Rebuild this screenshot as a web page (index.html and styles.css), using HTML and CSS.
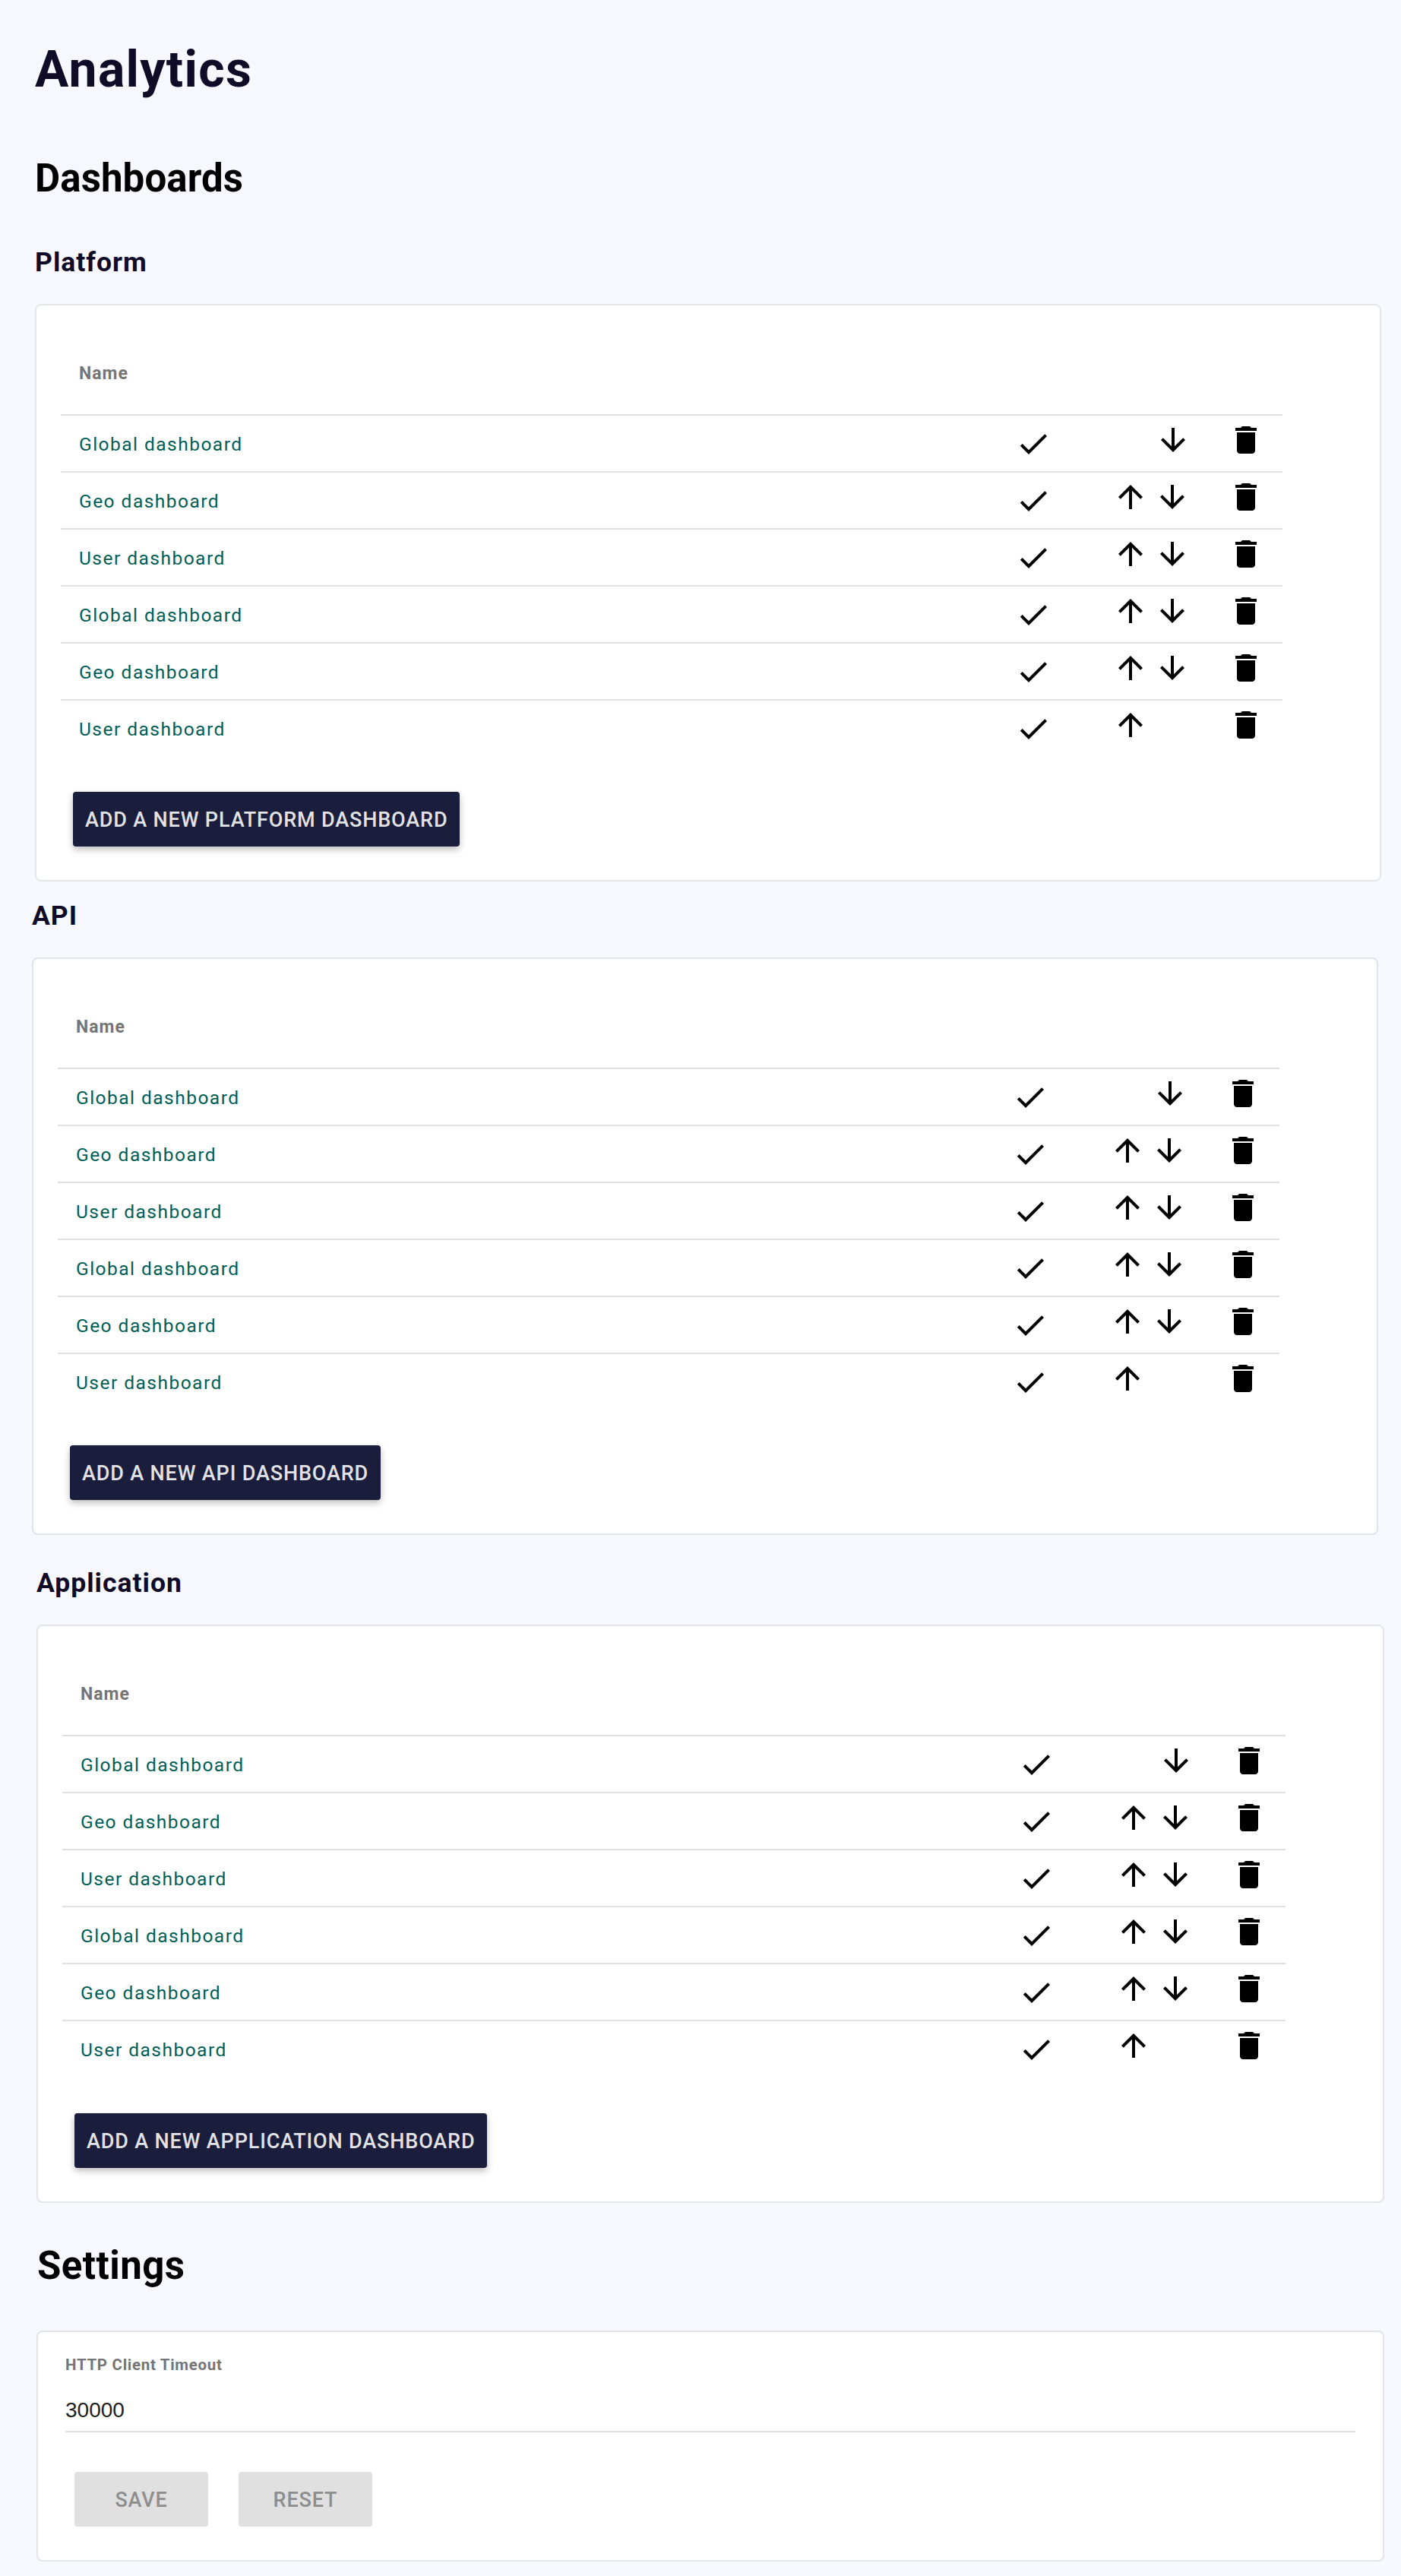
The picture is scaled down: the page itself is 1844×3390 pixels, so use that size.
FILE: index.html
```html
<!DOCTYPE html>
<html lang="en">
<head>
<meta charset="utf-8">
<title>Analytics</title>
<link rel="stylesheet" href="styles.css">
</head>
<body>
<svg class="sprite" aria-hidden="true">
  <symbol id="check" viewBox="0 0 24 24"><path d="M9 16.17L4.83 12l-1.42 1.41L9 19 21 7l-1.41-1.41z"/></symbol>
  <symbol id="up" viewBox="0 0 24 24"><path d="M4 12l1.41 1.41L11 7.83V20h2V7.83l5.58 5.59L20 12l-8-8-8 8z"/></symbol>
  <symbol id="down" viewBox="0 0 24 24"><path d="M20 12l-1.41-1.41L13 16.17V4h-2v12.17l-5.58-5.59L4 12l8 8 8-8z"/></symbol>
  <symbol id="trash" viewBox="0 0 24 24"><path d="M6 19c0 1.1.9 2 2 2h8c1.1 0 2-.9 2-2V7H6v12zM19 4h-3.5l-1-1h-5l-1 1H5v2h14V4z"/></symbol>
</svg>
<main class="page">
  <h1 class="title">Analytics</h1>
  <h2 class="heading heading-dashboards">Dashboards</h2>

  <section class="group group-platform">
    <h3 class="subheading">Platform</h3>
    <div class="card">
      <div class="table">
        <div class="table-head">Name</div>
        <div class="row"><a class="link">Global dashboard</a><svg class="icon check"><use href="#check"/></svg><svg class="icon down first"><use href="#down"/></svg><svg class="icon trash"><use href="#trash"/></svg></div>
        <div class="row"><a class="link">Geo dashboard</a><svg class="icon check"><use href="#check"/></svg><svg class="icon up"><use href="#up"/></svg><svg class="icon down"><use href="#down"/></svg><svg class="icon trash"><use href="#trash"/></svg></div>
        <div class="row"><a class="link">User dashboard</a><svg class="icon check"><use href="#check"/></svg><svg class="icon up"><use href="#up"/></svg><svg class="icon down"><use href="#down"/></svg><svg class="icon trash"><use href="#trash"/></svg></div>
        <div class="row"><a class="link">Global dashboard</a><svg class="icon check"><use href="#check"/></svg><svg class="icon up"><use href="#up"/></svg><svg class="icon down"><use href="#down"/></svg><svg class="icon trash"><use href="#trash"/></svg></div>
        <div class="row"><a class="link">Geo dashboard</a><svg class="icon check"><use href="#check"/></svg><svg class="icon up"><use href="#up"/></svg><svg class="icon down"><use href="#down"/></svg><svg class="icon trash"><use href="#trash"/></svg></div>
        <div class="row"><a class="link">User dashboard</a><svg class="icon check"><use href="#check"/></svg><svg class="icon up"><use href="#up"/></svg><svg class="icon trash"><use href="#trash"/></svg></div>
      </div>
      <button class="button add">ADD A NEW PLATFORM DASHBOARD</button>
    </div>
  </section>

  <section class="group group-api">
    <h3 class="subheading">API</h3>
    <div class="card">
      <div class="table">
        <div class="table-head">Name</div>
        <div class="row"><a class="link">Global dashboard</a><svg class="icon check"><use href="#check"/></svg><svg class="icon down first"><use href="#down"/></svg><svg class="icon trash"><use href="#trash"/></svg></div>
        <div class="row"><a class="link">Geo dashboard</a><svg class="icon check"><use href="#check"/></svg><svg class="icon up"><use href="#up"/></svg><svg class="icon down"><use href="#down"/></svg><svg class="icon trash"><use href="#trash"/></svg></div>
        <div class="row"><a class="link">User dashboard</a><svg class="icon check"><use href="#check"/></svg><svg class="icon up"><use href="#up"/></svg><svg class="icon down"><use href="#down"/></svg><svg class="icon trash"><use href="#trash"/></svg></div>
        <div class="row"><a class="link">Global dashboard</a><svg class="icon check"><use href="#check"/></svg><svg class="icon up"><use href="#up"/></svg><svg class="icon down"><use href="#down"/></svg><svg class="icon trash"><use href="#trash"/></svg></div>
        <div class="row"><a class="link">Geo dashboard</a><svg class="icon check"><use href="#check"/></svg><svg class="icon up"><use href="#up"/></svg><svg class="icon down"><use href="#down"/></svg><svg class="icon trash"><use href="#trash"/></svg></div>
        <div class="row"><a class="link">User dashboard</a><svg class="icon check"><use href="#check"/></svg><svg class="icon up"><use href="#up"/></svg><svg class="icon trash"><use href="#trash"/></svg></div>
      </div>
      <button class="button add">ADD A NEW API DASHBOARD</button>
    </div>
  </section>

  <section class="group group-application">
    <h3 class="subheading">Application</h3>
    <div class="card">
      <div class="table">
        <div class="table-head">Name</div>
        <div class="row"><a class="link">Global dashboard</a><svg class="icon check"><use href="#check"/></svg><svg class="icon down first"><use href="#down"/></svg><svg class="icon trash"><use href="#trash"/></svg></div>
        <div class="row"><a class="link">Geo dashboard</a><svg class="icon check"><use href="#check"/></svg><svg class="icon up"><use href="#up"/></svg><svg class="icon down"><use href="#down"/></svg><svg class="icon trash"><use href="#trash"/></svg></div>
        <div class="row"><a class="link">User dashboard</a><svg class="icon check"><use href="#check"/></svg><svg class="icon up"><use href="#up"/></svg><svg class="icon down"><use href="#down"/></svg><svg class="icon trash"><use href="#trash"/></svg></div>
        <div class="row"><a class="link">Global dashboard</a><svg class="icon check"><use href="#check"/></svg><svg class="icon up"><use href="#up"/></svg><svg class="icon down"><use href="#down"/></svg><svg class="icon trash"><use href="#trash"/></svg></div>
        <div class="row"><a class="link">Geo dashboard</a><svg class="icon check"><use href="#check"/></svg><svg class="icon up"><use href="#up"/></svg><svg class="icon down"><use href="#down"/></svg><svg class="icon trash"><use href="#trash"/></svg></div>
        <div class="row"><a class="link">User dashboard</a><svg class="icon check"><use href="#check"/></svg><svg class="icon up"><use href="#up"/></svg><svg class="icon trash"><use href="#trash"/></svg></div>
      </div>
      <button class="button add">ADD A NEW APPLICATION DASHBOARD</button>
    </div>
  </section>

  <section class="group group-settings">
    <h2 class="heading heading-settings">Settings</h2>
    <form class="card settings">
      <label class="label">HTTP Client Timeout</label>
      <div class="field">30000</div>
      <div class="actions">
        <button class="button disabled" type="button">SAVE</button>
        <button class="button disabled" type="button">RESET</button>
      </div>
    </form>
  </section>
</main>
</body>
</html>
```
FILE: styles.css
```css
* { box-sizing: border-box; }

body {
  margin: 0;
  min-height: 3390px;
  background: #f7f8fd;
  font-family: Roboto, "Liberation Sans", sans-serif;
}

h1, h2, h3 { margin: 0; font-weight: 700; }

.sprite { display: none; }

.page { display: flex; flex-direction: column; padding-top: 59px; }

.title {
  margin-left: 46px;
  color: #100c27;
  font-size: 66px;
  line-height: 66px;
  letter-spacing: 1.3px;
}

.heading { color: #000; font-size: 51px; line-height: 52px; }
.heading-dashboards { margin: 84px 0 0 46px; letter-spacing: 0.1px; }
.heading-settings { margin: 0 0 59px 1px; letter-spacing: 0.45px; }

.subheading {
  margin-bottom: 37px;
  color: #100c27;
  font-size: 35.5px;
  line-height: 36px;
  letter-spacing: 1px;
}

.group { width: 1772px; }
.group-platform { margin: 66px 0 0 46px; }
.group-api { margin: 27px 0 0 42px; }
.group-application { width: 1774px; margin: 45px 0 0 48px; }
.group-settings { width: 1774px; margin: 57px 0 0 48px; }

.card {
  height: 760px;
  padding: 0 128px 0 32px;
  background: #fff;
  border: 2px solid #e3e5e8;
  border-radius: 8px;
}
.group-application .card { height: 761px; }

.table-head {
  height: 145px;
  padding: 78px 24px 0;
  border-bottom: 2px solid #e0e0e0;
  color: #757575;
  font-size: 23px;
  font-weight: 700;
  line-height: 24px;
  letter-spacing: 1px;
}

.row {
  display: grid;
  grid-template-columns: 1fr 128px 55px 97px 48px;
  height: 75px;
  padding: 0 24px;
  border-bottom: 2px solid #e0e0e0;
}
.row:last-child { height: 73px; border-bottom: 0; }

.link {
  padding-top: 1px;
  color: #005e59;
  font-size: 24.5px;
  line-height: 74px;
  letter-spacing: 1.47px;
}

.icon { width: 48px; height: 48px; margin-top: 8px; fill: #000; }
.check { grid-column: 2; margin-top: 13px; }
.up { grid-column: 3; }
.down { grid-column: 4; }
.first { margin-left: 1px; }
.trash { grid-column: 5; }

.button {
  height: 72px;
  padding: 1px 16px 0;
  border: 0;
  border-radius: 4px;
  font-family: inherit;
  font-size: 27px;
  font-weight: 500;
  line-height: 72px;
  letter-spacing: 0.85px;
  white-space: nowrap;
}

.add {
  display: block;
  margin: 47px 0 0 16px;
  background: #1b1d3c;
  color: #e1e2e5;
  box-shadow: 0 4px 10px rgba(0, 0, 0, 0.26);
}
.group-application .add { margin-top: 48px; }

.settings { height: 304px; padding: 31px 36px 0; }

.label {
  display: block;
  color: #757575;
  font-size: 20.5px;
  font-weight: 700;
  line-height: 24px;
  letter-spacing: 0.7px;
}

.field {
  margin-top: 32px;
  padding-bottom: 11px;
  border-bottom: 2px solid #e0e0e0;
  color: #212121;
  font-family: "Liberation Sans", sans-serif;
  font-size: 28px;
  line-height: 32px;
}

.actions { display: flex; gap: 40px; margin: 52px 0 0 12px; }
.disabled { width: 176px; background: #e0e0e0; color: #8e8e8e; }
```
